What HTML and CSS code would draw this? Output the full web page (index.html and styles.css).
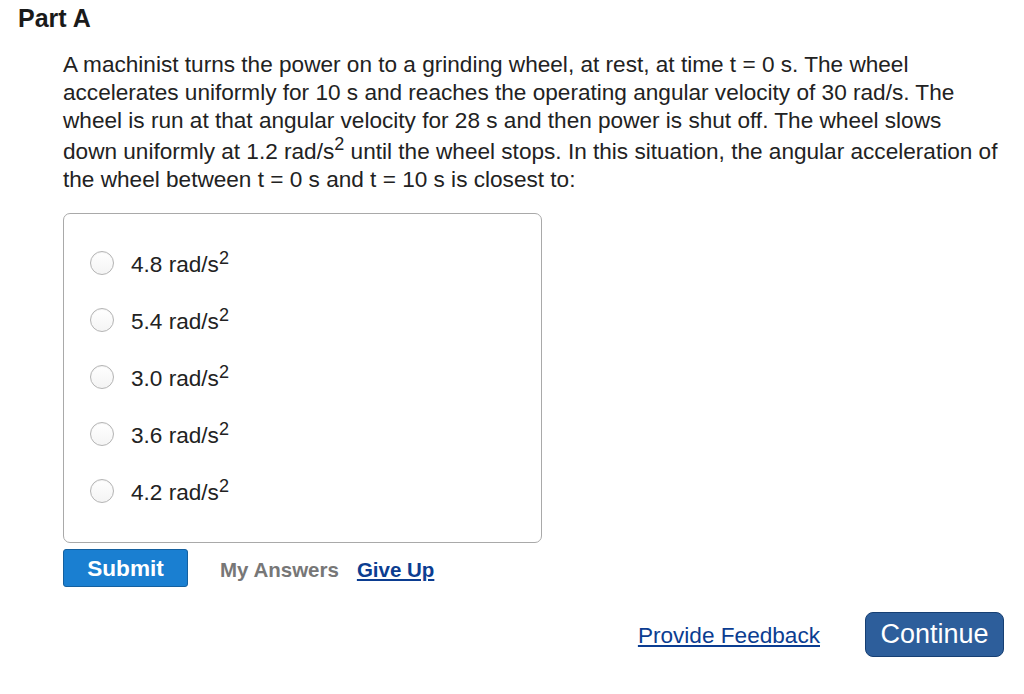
FILE: index.html
```html
<!DOCTYPE html>
<html>
<head>
<meta charset="utf-8">
<link rel="stylesheet" href="styles.css">
</head>
<body>
<div class="page">
  <h2 class="part-title">Part A</h2>
  <div class="question">
    <p class="prompt">A machinist turns the power on to a grinding wheel, at rest, at time t = 0 s. The wheel accelerates uniformly for 10 s and reaches the operating angular velocity of 30 rad/s. The wheel is run at that angular velocity for 28 s and then power is shut off. The wheel slows<br>down uniformly at 1.2 rad/s<sup>2</sup> until the wheel stops. In this situation, the angular acceleration of the wheel between t = 0 s and t = 10 s is closest to:</p>
    <div class="choices">
      <label class="choice"><span class="radio"></span><span class="choice-text">4.8 rad/s<sup>2</sup></span></label>
      <label class="choice"><span class="radio"></span><span class="choice-text">5.4 rad/s<sup>2</sup></span></label>
      <label class="choice"><span class="radio"></span><span class="choice-text">3.0 rad/s<sup>2</sup></span></label>
      <label class="choice"><span class="radio"></span><span class="choice-text">3.6 rad/s<sup>2</sup></span></label>
      <label class="choice"><span class="radio"></span><span class="choice-text">4.2 rad/s<sup>2</sup></span></label>
    </div>
    <div class="actions">
      <button class="btn-submit">Submit</button>
      <span class="my-answers">My Answers</span>
      <a class="give-up" href="#">Give Up</a>
    </div>
  </div>
  <div class="footer">
    <a class="feedback" href="#">Provide Feedback</a>
    <button class="btn-continue">Continue</button>
  </div>
</div>
</body>
</html>
```

FILE: styles.css
```css
html, body {
  margin: 0;
  padding: 0;
  background: #fff;
}
body {
  font-family: "Liberation Sans", Arial, Helvetica, sans-serif;
  color: #222;
}
.page {
  width: 1024px;
  height: 694px;
  padding: 0 20px 0 18px;
  box-sizing: border-box;
}
.part-title {
  margin: 0;
  padding-top: 4px;
  font-size: 25px;
  line-height: 28px;
  font-weight: bold;
  color: #1a1a1a;
}
.question {
  padding-left: 45px;
}
.prompt {
  margin: 19px 0 0 0;
  font-size: 22.6px;
  line-height: 28px;
  width: 945px;
}
.prompt sup {
  font-size: 0.8em;
  line-height: 1;
  vertical-align: 0.5em;
}
.choice-text sup {
  font-size: 0.8em;
  line-height: 0;
  vertical-align: 0.45em;
}
.choices {
  margin-top: 19px;
  width: 479px;
  height: 330px;
  box-sizing: border-box;
  border: 1.5px solid #a9a9a9;
  border-radius: 7px;
  padding: 37px 0 0 26px;
  display: flex;
  flex-direction: column;
  gap: 33px;
}
.choice {
  display: flex;
  align-items: center;
  height: 24px;
  font-size: 22.6px;
  color: #222;
}
.radio {
  width: 22px;
  height: 22px;
  border-radius: 50%;
  border: 1px solid #b4b4b4;
  background: linear-gradient(#fff, #f4f4f4);
  box-shadow: inset 0 1px 1px rgba(0,0,0,0.05);
  flex: none;
}
.choice-text {
  margin-left: 17px;
  padding-top: 3px;
}
.actions {
  margin-top: 6px;
  display: flex;
  align-items: center;
  height: 38px;
}
.btn-submit {
  width: 125px;
  height: 38px;
  background: #1a7fd1;
  border: 1px solid #14609f;
  border-radius: 3px;
  color: #fff;
  font-family: inherit;
  font-weight: bold;
  font-size: 22.6px;
  padding: 2px 0 0 0;
}
.my-answers {
  margin-left: 32px;
  padding-top: 3px;
  font-weight: bold;
  font-size: 20.5px;
  color: #777;
}
.give-up {
  margin-left: 18px;
  padding-top: 3px;
  font-weight: bold;
  font-size: 20.5px;
  color: #0b3d91;
  text-decoration: underline;
}
.footer {
  margin-top: 25px;
  display: flex;
  justify-content: flex-end;
  align-items: center;
}
.feedback {
  font-size: 22.6px;
  color: #0b3d91;
  text-decoration: underline;
  margin-top: 2px;
}
.btn-continue {
  margin-left: 45px;
  width: 139px;
  height: 45px;
  background: #2d5e9b;
  border: 1.5px solid #163f73;
  border-radius: 8px;
  color: #fff;
  font-family: inherit;
  font-size: 27px;
  padding: 0;
}
```
